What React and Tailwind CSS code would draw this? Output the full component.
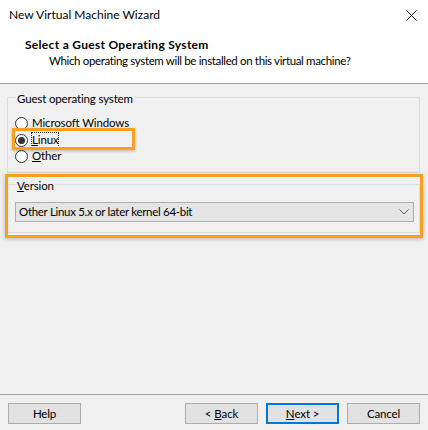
import React from "react";

const font = { fontFamily: 'Lato, "Segoe UI", sans-serif' };

function Radio({ checked, children, focus }) {
  return (
    <div className="flex h-[16px] items-center">
      <span className="flex h-[13px] w-[13px] items-center justify-center rounded-full border border-[#333333] bg-white">
        {checked && <span className="h-[7px] w-[7px] rounded-full bg-[#333333]" />}
      </span>
      <span
        className={
          "ml-[3px] leading-[14px] " +
          (focus ? "border border-dotted border-[#333]" : "border border-transparent")
        }
      >
        {children}
      </span>
    </div>
  );
}

function Btn({ children, primary }) {
  return (
    <button
      className={
        "flex h-[21px] w-[73px] items-center justify-center bg-[#e1e1e1] text-[11.5px] text-black " +
        (primary ? "border-2 border-[#0078d7]" : "border border-[#adadad]")
      }
    >
      {children}
    </button>
  );
}

export default function App() {
  return (
    <div className="flex h-[430px] w-[428px] flex-col bg-[#f0f0f0] text-[11.5px] tracking-[-0.15px] text-black" style={font}>
      <div className="h-[83px] bg-white">
        <div className="flex h-[30px] items-center justify-between pl-[9px] pr-[11px]">
          <span className="text-[12px] tracking-normal">New Virtual Machine Wizard</span>
          <svg width="11" height="11" viewBox="0 0 11 11">
            <path d="M0.5 0.5 L10.5 10.5 M10.5 0.5 L0.5 10.5" stroke="#111" strokeWidth="1" fill="none" />
          </svg>
        </div>
        <div className="pl-[25px] pt-[7px] text-[12px] font-bold leading-[16px] tracking-[0.3px]">
          Select a Guest Operating System
        </div>
        <div className="pl-[49px] leading-[15px] tracking-[-0.35px]">
          Which operating system will be installed on this virtual machine?
        </div>
      </div>
      <div className="h-px bg-[#a0a0a0]" />
      <div className="flex-1 pl-[7px] pr-[8px] pt-[3px]">
        <fieldset className="border border-[#dcdcdc] px-[7px] pb-[8px]">
          <legend className="ml-[1px] px-[1px] pt-[4px] leading-[16px]">Guest operating system</legend>
          <div className="mt-[8px] flex flex-col">
            <Radio>
              <span>Microsoft Windows</span>
            </Radio>
            <div className="relative mt-[1px]">
              <Radio checked focus>
                <u>L</u>inux
              </Radio>
              <div className="pointer-events-none absolute left-[-3px] top-[-4px] h-[22px] w-[123px] border-[3px] border-[#f5a21e] shadow-[0_1px_3px_rgba(0,0,0,0.25)]" />
            </div>
            <Radio>
              <u>O</u>ther
            </Radio>
          </div>
        </fieldset>
        <div className="relative mt-[1px]">
          <fieldset className="border border-[#dcdcdc] pb-[10px] pl-[7px] pr-[5px]">
            <legend className="ml-[1px] px-[1px] pt-[4px] leading-[16px]">
              <u>V</u>ersion
            </legend>
            <div className="mt-[8px] flex h-[20px] items-center justify-between border border-[#adadad] bg-[#e5e5e5] pl-[3px] pr-[4px]">
              <span className="tracking-[-0.3px]">Other Linux 5.x or later kernel 64-bit</span>
              <svg width="10" height="6" viewBox="0 0 10 6">
                <path d="M0.5 0.5 L5 5 L9.5 0.5" stroke="#555" strokeWidth="1" fill="none" />
              </svg>
            </div>
          </fieldset>
          <div className="pointer-events-none absolute bottom-[-5px] left-[-2px] right-[-3px] top-[0px] border-[3px] border-[#f5a21e] shadow-[0_1px_4px_rgba(0,0,0,0.25)]" />
        </div>
      </div>
      <div className="h-[36px] border-t border-[#a0a0a0] px-[8px] pt-[8px]">
        <div className="flex">
          <Btn>Help</Btn>
          <div className="flex-1" />
          <div className="flex gap-[8px]">
            <Btn>
              &lt; <u className="ml-[3px]">B</u>ack
            </Btn>
            <Btn primary>
              <u>N</u>ext &gt;
            </Btn>
            <Btn>Cancel</Btn>
          </div>
        </div>
      </div>
    </div>
  );
}
